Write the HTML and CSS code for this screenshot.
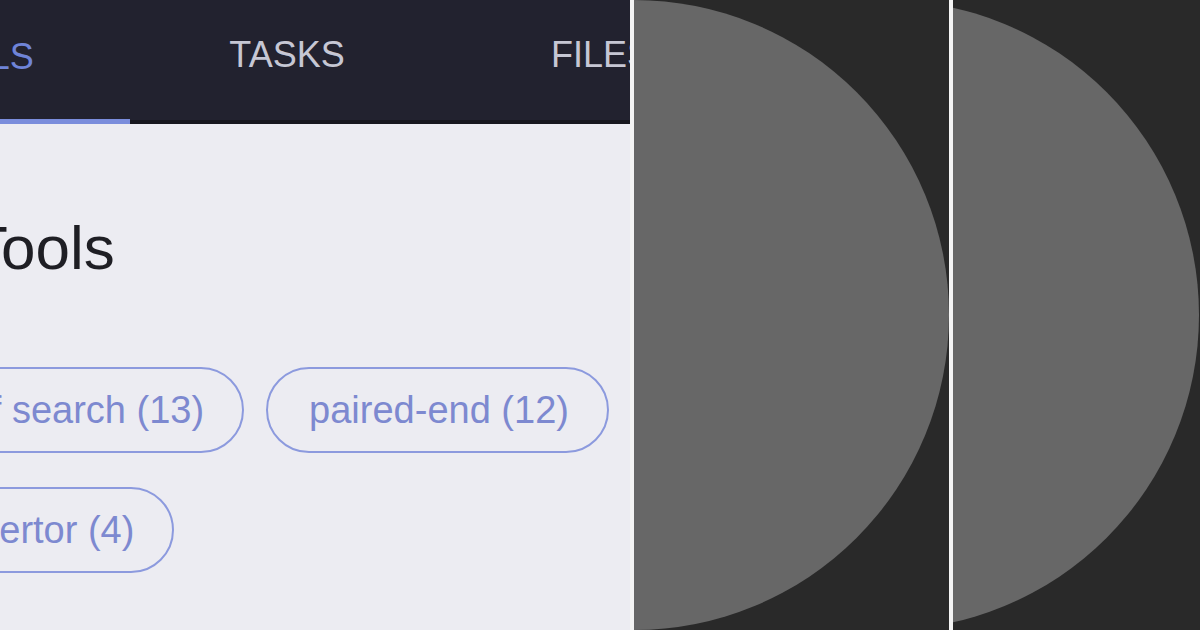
FILE: index.html
```html
<!DOCTYPE html>
<html lang="en">
<head>
<meta charset="utf-8">
<title>Tools</title>
<link rel="stylesheet" href="styles.css">
</head>
<body>
<div class="strip">
  <section class="shot">
    <nav class="tabs">
      <div class="tab active">TOOLS</div>
      <div class="tab">TASKS</div>
      <div class="tab">FILES</div>
    </nav>
    <main class="content">
      <h1 class="heading">All Tools</h1>
      <div class="chips">
        <span class="chip">motif search (13)</span>
        <span class="chip">paired-end (12)</span>
        <span class="chip">convertor (4)</span>
      </div>
    </main>
  </section>
  <div class="sep"></div>
  <section class="panel panel-a">
    <svg class="disc" width="315" height="630" viewBox="0 0 315 630"><circle cx="0" cy="315" r="315" fill="#676767"/></svg>
  </section>
  <div class="sep"></div>
  <section class="panel panel-b">
    <svg class="disc" width="247" height="630" viewBox="0 0 247 630"><circle cx="-69" cy="315" r="315" fill="#676767"/></svg>
  </section>
</div>
</body>
</html>
```

FILE: styles.css
```css
html, body {
  margin: 0;
  padding: 0;
  background: #292929;
}
body {
  width: 1200px;
  height: 630px;
  overflow: hidden;
  font-family: "Liberation Sans", Arial, sans-serif;
}
.strip {
  display: flex;
  width: 1200px;
  height: 630px;
}
.shot {
  width: 630px;
  flex: none;
  height: 630px;
  overflow: hidden;
  background: #ececf2;
  display: flex;
  flex-direction: column;
}
.tabs {
  display: flex;
  flex: none;
  height: 120px;
  margin-left: -184px;
  background: #22222f;
  border-bottom: 4px solid #17171f;
}
.tab {
  width: 314px;
  flex: none;
  box-sizing: border-box;
  display: flex;
  align-items: center;
  justify-content: center;
  padding-bottom: 10px;
  font-size: 36px;
  color: #c6c7d4;
}
.tab.active {
  color: #6f84d8;
  border-bottom: 5px solid #7a8ddc;
  margin-bottom: -4px;
  padding-bottom: 6px;
}
.content {
  margin-left: -124px;
  padding-top: 93px;
}
.heading {
  margin: 0;
  padding-left: 9px;
  font-weight: normal;
  font-size: 62px;
  line-height: 62px;
  color: #1e1e24;
}
.chips {
  margin-top: 88px;
  width: 780px;
  display: flex;
  flex-wrap: wrap;
  gap: 34px 22px;
}
.chip {
  display: inline-flex;
  align-items: center;
  height: 86px;
  box-sizing: border-box;
  padding: 0 38px 0 41px;
  border: 2px solid #8c9ade;
  border-radius: 43px;
  font-size: 38px;
  color: #7d89d0;
  white-space: nowrap;
}
.sep {
  width: 4px;
  flex: none;
  background: #f4f4f4;
}
.panel {
  flex: none;
  height: 630px;
  background: #292929;
  overflow: hidden;
}
.panel-a { width: 315px; }
.panel-b { width: 247px; }
.disc { display: block; }
```
